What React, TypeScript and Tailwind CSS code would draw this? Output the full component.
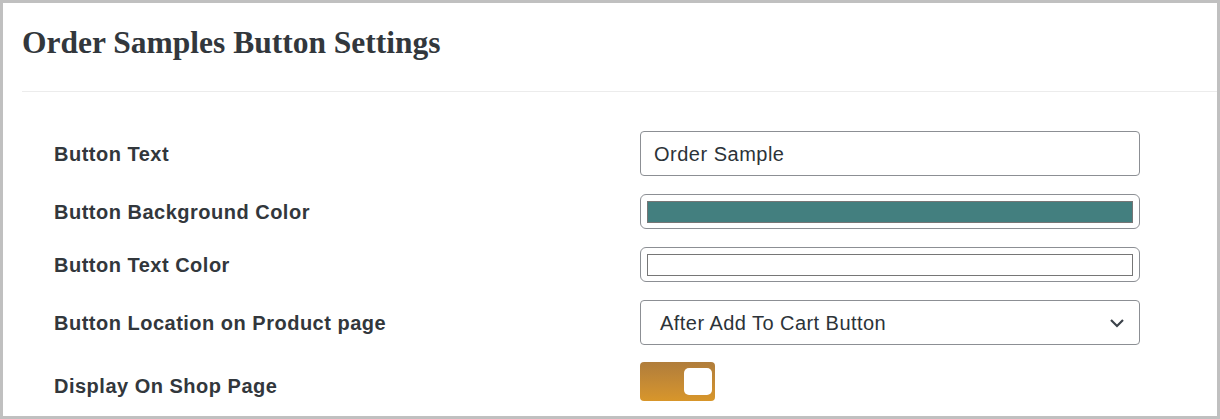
export default function App() {
  const rows: { label: string; control: React.ReactNode }[] = [
    {
      label: "Button Text",
      control: (
        <div className="flex h-[45px] items-center rounded-[4px] border border-[#8c8f94] bg-white px-[13px] text-[20px] tracking-[0.5px] text-[#2c3338]">
          Order Sample
        </div>
      ),
    },
    {
      label: "Button Background Color",
      control: (
        <div className="flex h-[35px] items-center rounded-[6px] border border-[#8c8f94] bg-white pl-[6px] pr-[6px]">
          <div className="h-[22px] w-full border border-[#767676] bg-[#437f7f]" />
        </div>
      ),
    },
    {
      label: "Button Text Color",
      control: (
        <div className="flex h-[35px] items-center rounded-[6px] border border-[#8c8f94] bg-white pl-[6px] pr-[6px]">
          <div className="h-[22px] w-full border border-[#767676] bg-white" />
        </div>
      ),
    },
    {
      label: "Button Location on Product page",
      control: (
        <div className="flex h-[45px] items-center justify-between rounded-[4px] border border-[#8c8f94] bg-white pl-[19px] pr-[14px] text-[20px] tracking-[0.45px] text-[#2c3338]">
          <span>After Add To Cart Button</span>
          <svg width="16" height="10" viewBox="0 0 16 10" fill="none">
            <path d="M2 2l6 6 6-6" stroke="#3c434a" strokeWidth="2.2" />
          </svg>
        </div>
      ),
    },
  ];

  return (
    <div
      className="h-[419px] w-[1220px] overflow-hidden border-[3px] border-[#c0c0c0] bg-white text-[#32373c]"
      style={{ fontFamily: '"Liberation Sans", Arial, sans-serif' }}
    >
      <h1
        className="ml-[19px] mt-[22px] text-[31.5px] font-bold leading-[36px] text-[#32373c]"
        style={{ fontFamily: '"Liberation Serif", "Times New Roman", serif' }}
      >
        Order Samples Button Settings
      </h1>
      <div className="ml-[19px] mt-[30px] h-px bg-[#ececec]" />

      <div className="mt-[39px] flex flex-col gap-[18px]">
        {rows.map((r) => (
          <div key={r.label} className="flex items-center">
            <div className="w-[637px] pl-[51px] text-[20px] font-bold tracking-[0.5px]">{r.label}</div>
            <div className="w-[500px]">{r.control}</div>
          </div>
        ))}
        <div className="-mt-px flex items-start">
          <div className="w-[637px] pl-[51px] pt-[9px] text-[20px] font-bold tracking-[0.5px]">Display On Shop Page</div>
          <div className="flex h-[39px] w-[75px] items-center justify-end rounded-[4px] bg-gradient-to-b from-[#b07d3b] to-[#d8962a] pr-[3px]">
            <div className="h-[27px] w-[28px] rounded-[5px] bg-white" />
          </div>
        </div>
      </div>
    </div>
  );
}
